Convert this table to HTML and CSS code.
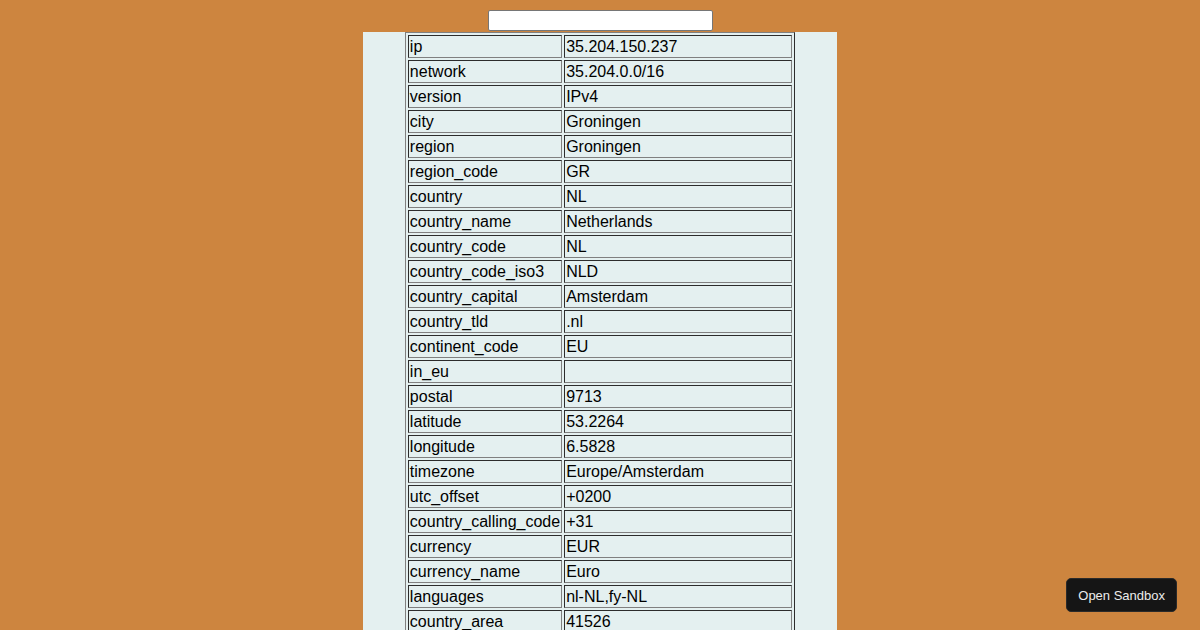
FILE: index.html
```html
<!DOCTYPE html>
<html>
<head>
<meta charset="utf-8">
<link rel="stylesheet" href="styles.css">
</head>
<body>
<div class="top"><input class="search" type="text"></div>
<div class="panel">
<table class="info">
<tr><td class="k">ip</td><td class="v">35.204.150.237</td></tr>
<tr><td class="k">network</td><td class="v">35.204.0.0/16</td></tr>
<tr><td class="k">version</td><td class="v">IPv4</td></tr>
<tr><td class="k">city</td><td class="v">Groningen</td></tr>
<tr><td class="k">region</td><td class="v">Groningen</td></tr>
<tr><td class="k">region_code</td><td class="v">GR</td></tr>
<tr><td class="k">country</td><td class="v">NL</td></tr>
<tr><td class="k">country_name</td><td class="v">Netherlands</td></tr>
<tr><td class="k">country_code</td><td class="v">NL</td></tr>
<tr><td class="k">country_code_iso3</td><td class="v">NLD</td></tr>
<tr><td class="k">country_capital</td><td class="v">Amsterdam</td></tr>
<tr><td class="k">country_tld</td><td class="v">.nl</td></tr>
<tr><td class="k">continent_code</td><td class="v">EU</td></tr>
<tr><td class="k">in_eu</td><td class="v"></td></tr>
<tr><td class="k">postal</td><td class="v">9713</td></tr>
<tr><td class="k">latitude</td><td class="v">53.2264</td></tr>
<tr><td class="k">longitude</td><td class="v">6.5828</td></tr>
<tr><td class="k">timezone</td><td class="v">Europe/Amsterdam</td></tr>
<tr><td class="k">utc_offset</td><td class="v">+0200</td></tr>
<tr><td class="k">country_calling_code</td><td class="v">+31</td></tr>
<tr><td class="k">currency</td><td class="v">EUR</td></tr>
<tr><td class="k">currency_name</td><td class="v">Euro</td></tr>
<tr><td class="k">languages</td><td class="v">nl-NL,fy-NL</td></tr>
<tr><td class="k">country_area</td><td class="v">41526</td></tr>
<tr><td class="k">country_population</td><td class="v">17231017</td></tr>
<tr><td class="k">asn</td><td class="v">AS396982</td></tr>
<tr><td class="k">org</td><td class="v">GOOGLE-CLOUD</td></tr>
</table>
</div>
<button class="sandbox">Open Sandbox</button>
</body>
</html>
```
FILE: styles.css
```css
html, body {
  margin: 0;
  padding: 0;
}
body {
  background: #cd853f;
  font-family: "Liberation Sans", Arial, sans-serif;
  font-size: 16px;
  color: #000;
}
.top {
  padding-top: 10px;
  height: 22px;
}
.search {
  display: block;
  box-sizing: border-box;
  width: 225px;
  height: 21px;
  margin: 0 auto;
  border: 1px solid #767676;
  border-radius: 2px;
  background: #fff;
  padding: 1px 2px;
}
.panel {
  width: 474px;
  margin: 0 auto;
  background: #e4f0f0;
  min-height: 900px;
}
.info {
  margin: 0 auto;
  border: 1px outset #808080;
  border-spacing: 2px;
  font-size: 16px;
}
.info td {
  border: 1px inset #808080;
  padding: 1px;
  line-height: 19px;
  height: 19px;
  white-space: nowrap;
}
.info td.v {
  width: 224px;
  max-width: 224px;
  overflow: hidden;
}
.sandbox {
  position: fixed;
  right: 23px;
  bottom: 18px;
  height: 34px;
  padding: 0 11px;
  background: #151515;
  color: #ececec;
  border: 1px solid #2a2a2a;
  border-radius: 5px;
  font-family: "Liberation Sans", Arial, sans-serif;
  font-size: 13px;
}
```
